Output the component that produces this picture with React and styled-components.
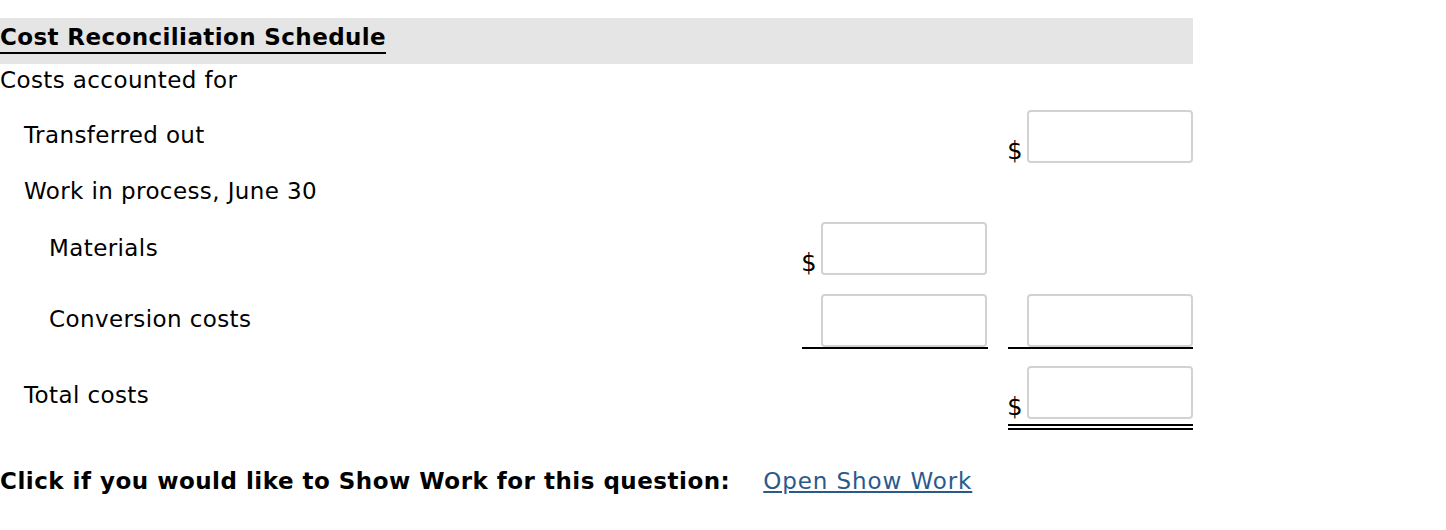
import React from "react";
import styled, { createGlobalStyle } from "styled-components";

const GlobalStyle = createGlobalStyle`
  body {
    margin: 0;
    background: #fff;
    color: #000;
    font-family: "DejaVu Sans", Verdana, sans-serif;
    font-size: 23px;
    letter-spacing: 0.4px;
  }
`;

const Page = styled.div`
  width: 1193px;
  padding-top: 18px;
`;

const HeaderBar = styled.div`
  background: #e5e5e5;
  height: 46px;
  display: flex;
  align-items: flex-start;
`;

const Title = styled.h2`
  margin: 0;
  padding-top: 4px;
  font-size: 23px;
  font-weight: bold;
  line-height: 30px;
  border-bottom: 2px solid #000;
`;

const SectionLabel = styled.div`
  line-height: 32px;
`;

const Row = styled.div`
  display: grid;
  grid-template-columns: 1fr 186px 185px;
  column-gap: 20px;
  align-items: start;
  margin-top: ${({ $gap }) => $gap}px;
`;

const Label = styled.div`
  padding-left: ${({ $indent }) => $indent}px;
  padding-top: ${({ $top }) => $top ?? 10}px;
  line-height: 32px;
`;

const Cell = styled.div`
  display: flex;
  justify-content: flex-end;
  align-items: flex-end;
  padding-right: ${({ $inset }) => $inset || 0}px;
  border-bottom: ${({ $line }) =>
    $line === "single"
      ? "2px solid #000"
      : $line === "double"
      ? "6px double #000"
      : "none"};
  padding-bottom: ${({ $line }) => ($line === "double" ? 5 : 0)}px;
`;

const Dollar = styled.span`
  font-size: 24px;
  line-height: 24px;
  margin-bottom: 0;
  padding-right: 4px;
`;

const Box = styled.input`
  box-sizing: border-box;
  width: 166px;
  height: 53px;
  border: 2px solid #d2d2d2;
  border-radius: 4px;
  background: #fff;
  font: inherit;
  padding: 0 6px;
  outline: none;
`;

const Footer = styled.div`
  margin-top: 35px;
  line-height: 32px;
  display: flex;
  align-items: center;
`;

const Prompt = styled.span`
  font-weight: bold;
  letter-spacing: 0.5px;
`;

const ShowWork = styled.a`
  margin-left: 33px;
  color: #2a5a8c;
  letter-spacing: 0.9px;
  text-decoration: underline;
  cursor: pointer;
`;

const Amount = ({ dollar, line, inset }) => (
  <Cell $line={line} $inset={inset}>
    {dollar && <Dollar>$</Dollar>}
    <Box type="text" />
  </Cell>
);

export default function App() {
  return (
    <Page>
      <GlobalStyle />
      <HeaderBar>
        <Title>Cost Reconciliation Schedule</Title>
      </HeaderBar>
      <SectionLabel>Costs accounted for</SectionLabel>

      <Row $gap={14}>
        <Label $indent={24} $top={9}>Transferred out</Label>
        <div />
        <Amount dollar />
      </Row>

      <Row $gap={12}>
        <Label $indent={24} $top={0}>Work in process, June 30</Label>
      </Row>

      <Row $gap={15}>
        <Label $indent={49} $top={10}>Materials</Label>
        <Amount dollar inset={1} />
        <div />
      </Row>

      <Row $gap={19}>
        <Label $indent={49} $top={9}>Conversion costs</Label>
        <Amount line="single" inset={1} />
        <Amount line="single" />
      </Row>

      <Row $gap={17}>
        <Label $indent={24} $top={13}>Total costs</Label>
        <div />
        <Amount dollar line="double" />
      </Row>

      <Footer>
        <Prompt>Click if you would like to Show Work for this question:</Prompt>
        <ShowWork href="#">Open Show Work</ShowWork>
      </Footer>
    </Page>
  );
}
